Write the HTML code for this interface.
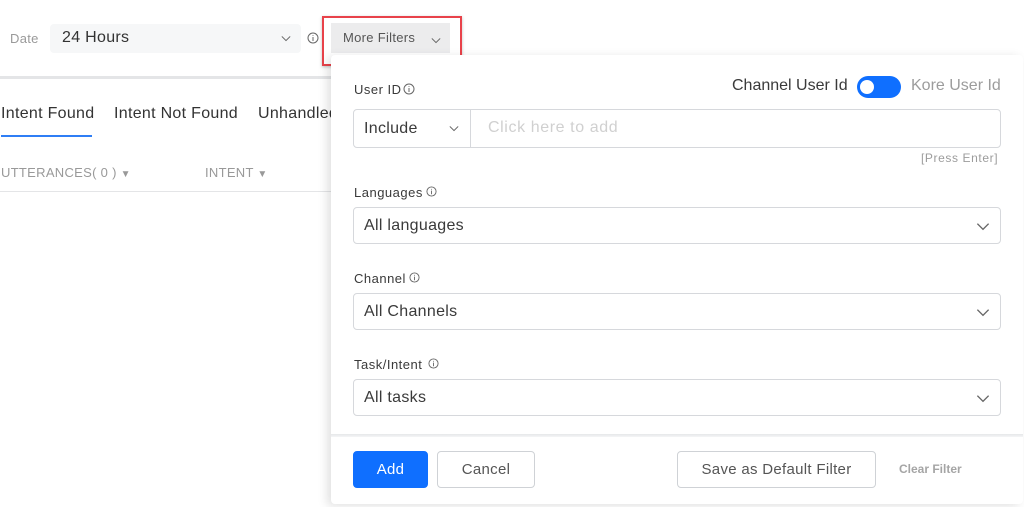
<!DOCTYPE html>
<html><head><meta charset="utf-8"><style>
*{box-sizing:border-box;margin:0;padding:0}
body{width:1024px;height:507px;background:#fff;font-family:"Liberation Sans",sans-serif;position:relative;overflow:hidden;color:#333;letter-spacing:.3px}
.a{position:absolute}
.chev{position:absolute}
.sel{position:absolute;left:353px;width:648px;height:37px;border:1px solid #d6d8dc;border-radius:4px;font-size:16px;color:#3a3a3a;padding:9px 0 0 10px}
.lbl{position:absolute;left:354px;font-size:13px;color:#3a3a3a;letter-spacing:.5px}
.btn{position:absolute;top:451px;height:37px;border:1px solid #cfd2d6;border-radius:4px;font-size:15px;color:#555;text-align:center;line-height:35px;background:#fff}
</style></head><body>
<svg width="0" height="0" style="position:absolute"><defs>
<symbol id="cv" viewBox="0 0 12 8"><path d="M1 1.5l5 5 5-5" fill="none" stroke="#666" stroke-width="1.2"/></symbol>
<symbol id="inf" viewBox="0 0 12 12"><circle cx="6" cy="6" r="5" fill="none" stroke="#666" stroke-width="1"/><path d="M6 5v4M6 3.2v.8" stroke="#666" stroke-width="1"/></symbol>
</defs></svg>

<div class="a" style="left:10px;top:31px;font-size:13px;color:#9a9a9a">Date</div>
<div class="a" style="left:50px;top:24px;width:251px;height:29px;background:#f6f7f8;border-radius:4px"></div>
<div class="a" style="left:62px;top:29px;font-size:16px;color:#333">24 Hours</div>
<svg class="chev" style="left:281px;top:35px" width="10" height="7"><use href="#cv"/></svg>
<svg class="chev" style="left:307px;top:32px" width="12" height="12"><use href="#inf"/></svg>
<div class="a" style="left:331px;top:23px;width:119px;height:30px;background:#ececed"></div>
<div class="a" style="left:343px;top:30px;font-size:13px;color:#555">More Filters</div>
<svg class="chev" style="left:431px;top:37px" width="10" height="7"><use href="#cv"/></svg>
<div class="a" style="left:322px;top:16px;width:140px;height:50px;border:2px solid #e8424a;box-shadow:0 1px 3px rgba(0,0,0,.25)"></div>

<div class="a" style="left:0;top:76px;width:340px;height:3px;background:#e4e5e7"></div>
<div class="a" style="left:1px;top:105px;font-size:16px;color:#333">Intent Found</div>
<div class="a" style="left:1px;top:135px;width:91px;height:2px;background:#2f7ef5"></div>
<div class="a" style="left:114px;top:105px;font-size:16px;color:#333">Intent Not Found</div>
<div class="a" style="left:258px;top:105px;font-size:16px;color:#333">Unhandled</div>
<div class="a" style="left:1px;top:165px;font-size:13px;color:#999">UTTERANCES( 0 ) <span style="font-size:10px">▼</span></div>
<div class="a" style="left:205px;top:165px;font-size:13px;color:#999">INTENT <span style="font-size:10px">▼</span></div>
<div class="a" style="left:0;top:191px;width:340px;height:1px;background:#e4e5e7"></div>

<div class="a" style="left:331px;top:55px;width:692px;height:449px;background:#fff;border-radius:4px;box-shadow:-4px 2px 10px rgba(0,0,0,.12)"></div>

<div class="lbl" style="top:82px">User ID</div>
<svg class="chev" style="left:403px;top:83px" width="12" height="12"><use href="#inf"/></svg>
<div class="a" style="left:732px;top:77px;font-size:16px;color:#3a3a3a;letter-spacing:0">Channel User Id</div>
<div class="a" style="left:857px;top:76px;width:44px;height:22px;border-radius:11px;background:#0f6fff"></div>
<div class="a" style="left:860px;top:80px;width:14px;height:14px;border-radius:7px;background:#fff"></div>
<div class="a" style="left:911px;top:77px;font-size:16px;color:#9c9c9c;letter-spacing:0">Kore User Id</div>

<div class="sel" style="top:109px;height:39px;padding-top:10px">Include</div>
<div class="a" style="left:470px;top:110px;width:1px;height:37px;background:#d6d8dc"></div>
<svg class="chev" style="left:449px;top:125px" width="10" height="7"><use href="#cv"/></svg>
<div class="a" style="left:488px;top:119px;font-size:16px;color:#d0d0d0;letter-spacing:.6px">Click here to add</div>
<div class="a" style="left:921px;top:151px;font-size:12px;color:#9c9c9c;letter-spacing:.6px">[Press Enter]</div>

<div class="lbl" style="top:185px">Languages</div>
<svg class="chev" style="left:426px;top:186px" width="11" height="11"><use href="#inf"/></svg>
<div class="sel" style="top:207px">All languages</div>
<svg class="chev" style="left:976px;top:222px" width="14" height="9"><use href="#cv"/></svg>

<div class="lbl" style="top:271px">Channel</div>
<svg class="chev" style="left:409px;top:272px" width="11" height="11"><use href="#inf"/></svg>
<div class="sel" style="top:293px">All Channels</div>
<svg class="chev" style="left:976px;top:308px" width="14" height="9"><use href="#cv"/></svg>

<div class="lbl" style="top:357px">Task/Intent</div>
<svg class="chev" style="left:428px;top:358px" width="11" height="11"><use href="#inf"/></svg>
<div class="sel" style="top:379px">All tasks</div>
<svg class="chev" style="left:976px;top:394px" width="14" height="9"><use href="#cv"/></svg>

<div class="a" style="left:331px;top:434px;width:692px;height:3px;background:linear-gradient(#e6e7e9,#f4f5f6)"></div>
<div class="btn" style="left:353px;width:75px;background:#0f6fff;border-color:#0f6fff;color:#fff">Add</div>
<div class="btn" style="left:437px;width:98px">Cancel</div>
<div class="btn" style="left:677px;width:199px">Save as Default Filter</div>
<div class="a" style="left:899px;top:462px;font-size:12px;color:#a5a5a5;font-weight:bold;letter-spacing:0">Clear Filter</div>
</body></html>
